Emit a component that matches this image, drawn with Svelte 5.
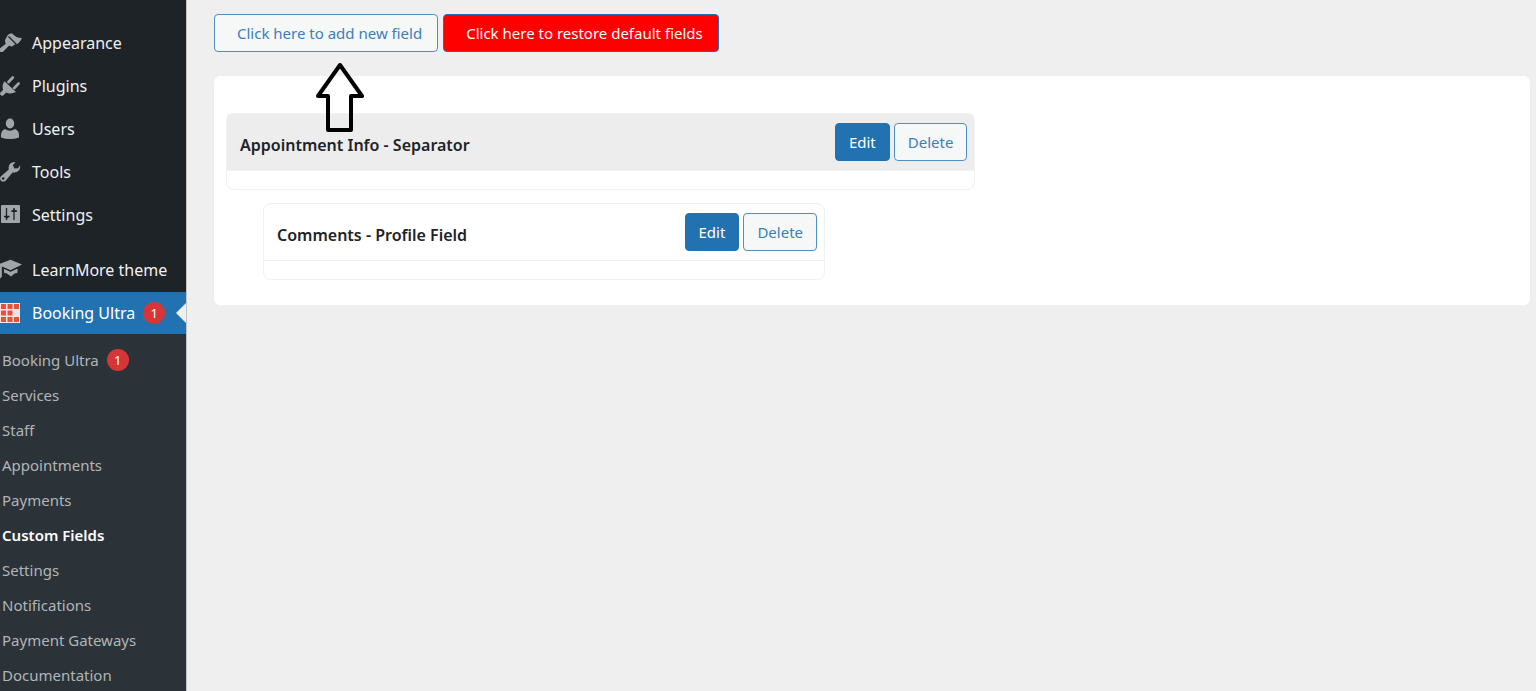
<script lang="ts">
  interface MenuItem {
    label: string;
    icon: string;
    count?: number;
    separated?: boolean;
    current?: boolean;
  }

  const menu: MenuItem[] = [
    { label: "Appearance", icon: "brush" },
    { label: "Plugins", icon: "plug" },
    { label: "Users", icon: "user" },
    { label: "Tools", icon: "wrench" },
    { label: "Settings", icon: "sliders" },
    { label: "LearnMore theme", icon: "cap", separated: true },
    { label: "Booking Ultra", icon: "grid", count: 1, current: true },
  ];

  const submenu = [
    { label: "Booking Ultra", count: 1 },
    { label: "Services" },
    { label: "Staff" },
    { label: "Appointments" },
    { label: "Payments" },
    { label: "Custom Fields", current: true },
    { label: "Settings" },
    { label: "Notifications" },
    { label: "Payment Gateways" },
    { label: "Documentation" },
  ];

  const fields = [
    { title: "Appointment Info - Separator", type: "separator" },
    { title: "Comments - Profile Field", type: "field" },
  ];
</script>

<div class="admin">
  <nav class="sidebar" aria-label="Main menu">
    <ul class="menu">
      {#each menu as item}
        <li class:separated={item.separated}>
          <a href="#top" class:current={item.current}>
            <svg class="icon" viewBox="0 0 22 22" aria-hidden="true">
              {#if item.icon === "brush"}
                <path d="M7.500 3.500Q9 1 12 1.500L19.500 9.200Q17.500 12.600 14.500 12.400L12.500 14.200Q10.800 14.800 9.200 13.400L3.600 19.200Q1 21-1 19V17L5.800 11.800Q4.300 9 5.500 7Z" />
                <path d="M12 1.500Q17 6.500 22 6Q20.500 9.500 17.500 12L9 4Z" />
                <path class="cut" d="M8.500 4.500 16.500 12.500" />
              {:else if item.icon === "plug"}
                <path d="M4.500 6.200 16 17Q10.500 19.600 6.200 17.600L3.300 20.400Q1.500 21.500.2 19.600Q-.4 18 1 17L3.200 14.800Q1.500 10 4.500 6.200Z" />
                <path class="line" d="M8.500 7 12.800 2.600M14.300 13 18.500 8.600" />
              {:else if item.icon === "user"}
                <ellipse cx="10" cy="5.500" rx="4.200" ry="5" />
                <path d="M5 11Q10 14.500 15 11Q19 12.500 19 17V19.500Q10 22.500 1 19.500V17Q1 12.500 5 11Z" />
              {:else if item.icon === "wrench"}
                <path fill-rule="evenodd" d="M15.500 1 12.800 4.300 14.500 7.500 18 7.200 20 4.200Q20.800 9.500 16.500 11Q14.500 11.700 12.500 11.500L6.500 18.800Q5 21 2.300 20.600Q-.6 19.500.2 16.500Q.6 15.500 1.600 14.700L8.800 8.500Q8 5 10.300 2.600Q12.500.5 15.500 1ZM3.200 16.200A1.300 1.300 0 1 0 3.200 18.800A1.300 1.300 0 1 0 3.200 16.200Z" />
              {:else if item.icon === "sliders"}
                <rect x="1" y="1" width="19" height="18" rx="1" />
                <path class="cut" d="M6.500 4V16M14 4V16M4 12.500H9.500M11.500 7H17" />
                <path class="dark" d="M4 12H9.500L6.800 15ZM11.200 8H16.800L14 4.500Z" />
              {:else if item.icon === "cap"}
                <path d="M-1 5.200 10.500.8 22 5.500 10.500 11.200 1.800 7.500V18L-.5 20V6Z" />
                <path d="M4 9.800 10.500 12.800 17.500 9.500V13.500Q17 14.500 15 14.200L11 17.500 6.500 14.200Q4.500 14.500 4 13.500Z" />
                <path class="thin" d="M3.500 9 10.500 12 18 8.500" />
              {:else}
                <path fill="#fbe4df" d="M0 1H20V21H0Z" />
                <g fill="#e8503a">
                  <path d="M1 2H6V7H1ZM7.500 2H12.500V7H7.500ZM14 2H19V7H14Z" />
                  <path d="M1 8.500H6V13.500H1ZM7.500 8.500H12.500V13.500H7.500ZM1 15H6V20H1ZM7.500 15H12.500V20H7.500ZM14 15H19V20H14Z" />
                </g>
                <path fill="#e4e6ea" d="M14 8.500H19V13.500H14Z" />
              {/if}
            </svg>
            <span>{item.label}</span>
            {#if item.count}<span class="count">{item.count}</span>{/if}
          </a>
        </li>
      {/each}
    </ul>

    <ul class="submenu">
      {#each submenu as item}
        <li>
          <a href="#top" class:current={item.current}>
            <span>{item.label}</span>
            {#if item.count}<span class="count">{item.count}</span>{/if}
          </a>
        </li>
      {/each}
    </ul>
  </nav>

  <main class="content">
    <div class="actions">
      <div class="add">
        <button class="button wide">Click here to add new field</button>
        <svg class="arrow" viewBox="0 0 48 70" aria-hidden="true">
          <path d="M24 3 46 34H35V68H12V34H2Z" />
        </svg>
      </div>
      <button class="button wide restore">Click here to restore default fields</button>
    </div>

    <section class="panel">
      {#each fields as field}
        <article class="card {field.type}">
          <header>
            <h3>{field.title}</h3>
            <button class="button primary">Edit</button>
            <button class="button">Delete</button>
          </header>
        </article>
      {/each}
    </section>
  </main>
</div>

<style>
  :global(body) {
    margin: 0;
    background: #efefef;
  }

  .admin {
    display: flex;
    height: 100vh;
    overflow: hidden;
    font-family: "Segoe UI", "Noto Sans", sans-serif;
    font-size: 16px;
    color: #1d2327;
  }

  .sidebar {
    flex: 0 0 186px;
    display: flex;
    flex-direction: column;
    background: #1d2327;
  }

  ul {
    margin: 0;
    padding: 0;
    list-style: none;
  }

  .sidebar a {
    display: flex;
    align-items: center;
    text-decoration: none;
    white-space: nowrap;
  }

  .menu {
    display: flex;
    flex-direction: column;
    gap: 1px;
    padding-top: 22px;
  }

  .menu .separated {
    margin-top: 12px;
  }

  .menu a {
    position: relative;
    height: 42px;
    color: #f0f0f1;
  }

  .menu a.current {
    background: #2271b1;
    color: #fff;
  }

  .menu a.current::after {
    content: "";
    position: absolute;
    right: 0;
    border: 10px solid transparent;
    border-left-width: 0;
    border-right-color: #efefef;
  }

  .icon {
    width: 22px;
    height: 22px;
    margin-right: 10px;
    fill: #a0a5aa;
  }

  .icon .cut {
    fill: none;
    stroke: #1d2327;
    stroke-width: 1.3;
  }

  .icon .dark {
    fill: #1d2327;
  }

  .icon .line {
    fill: none;
    stroke: #a0a5aa;
    stroke-width: 2.8;
    stroke-linecap: round;
  }

  .icon .thin {
    fill: none;
    stroke: #1d2327;
    stroke-width: 1;
  }

  .count {
    width: 22px;
    margin-left: 8px;
    border-radius: 50%;
    background: #d63638;
    color: #fff;
    font-size: 13px;
    line-height: 22px;
    text-align: center;
  }

  .submenu {
    flex: 1;
    padding-top: 8px;
    background: #2c3338;
  }

  .submenu a {
    height: 35px;
    padding-left: 2px;
    color: #b1b5b9;
    font-size: 15px;
  }

  .submenu a.current {
    color: #fff;
    font-weight: 600;
  }

  .content {
    flex: 1;
    min-width: 0;
    padding: 14px 6px 0 27px;
    border-left: 1px solid #c3c4c7;
  }

  .actions {
    display: flex;
    gap: 5px;
    margin-bottom: 24px;
  }

  .add {
    position: relative;
  }

  .arrow {
    position: absolute;
    top: 48px;
    left: 102px;
    width: 48px;
    height: 70px;
    fill: none;
    stroke: #000;
    stroke-width: 4;
    stroke-linejoin: round;
  }

  .button {
    height: 38px;
    padding: 0 13px;
    border: 1px solid #4f8fc4;
    border-radius: 4px;
    background: #f6f7f7;
    color: #3b7fb9;
    font: inherit;
    font-size: 15px;
    white-space: nowrap;
    cursor: pointer;
  }

  .button.wide {
    padding: 0 15px 0 22px;
  }

  .button.primary {
    border-color: #2271b1;
    background: #2271b1;
    color: #fff;
  }

  .button.restore {
    border-color: #2271b1;
    background: #f00;
    color: #fff;
  }

  .panel {
    display: flex;
    flex-direction: column;
    gap: 13px;
    padding: 37px 12px 25px;
    border-radius: 6px;
    background: #fff;
  }

  .card {
    box-sizing: border-box;
    width: 58%;
    padding-bottom: 18px;
    border: 1px solid #f1f1f1;
    border-radius: 8px;
  }

  .card.field {
    width: 43.5%;
    margin-left: 37px;
  }

  .card header {
    display: flex;
    align-items: center;
    gap: 4px;
    height: 56px;
    padding: 0 7px 0 13px;
    border-bottom: 1px solid #f1f1f1;
  }

  .card.separator header {
    border-radius: 4px 4px 0 0;
    background: #ededed;
  }

  h3 {
    flex: 1;
    margin: 0;
    padding-top: 6px;
    font-size: 16px;
    font-weight: 600;
  }
</style>
